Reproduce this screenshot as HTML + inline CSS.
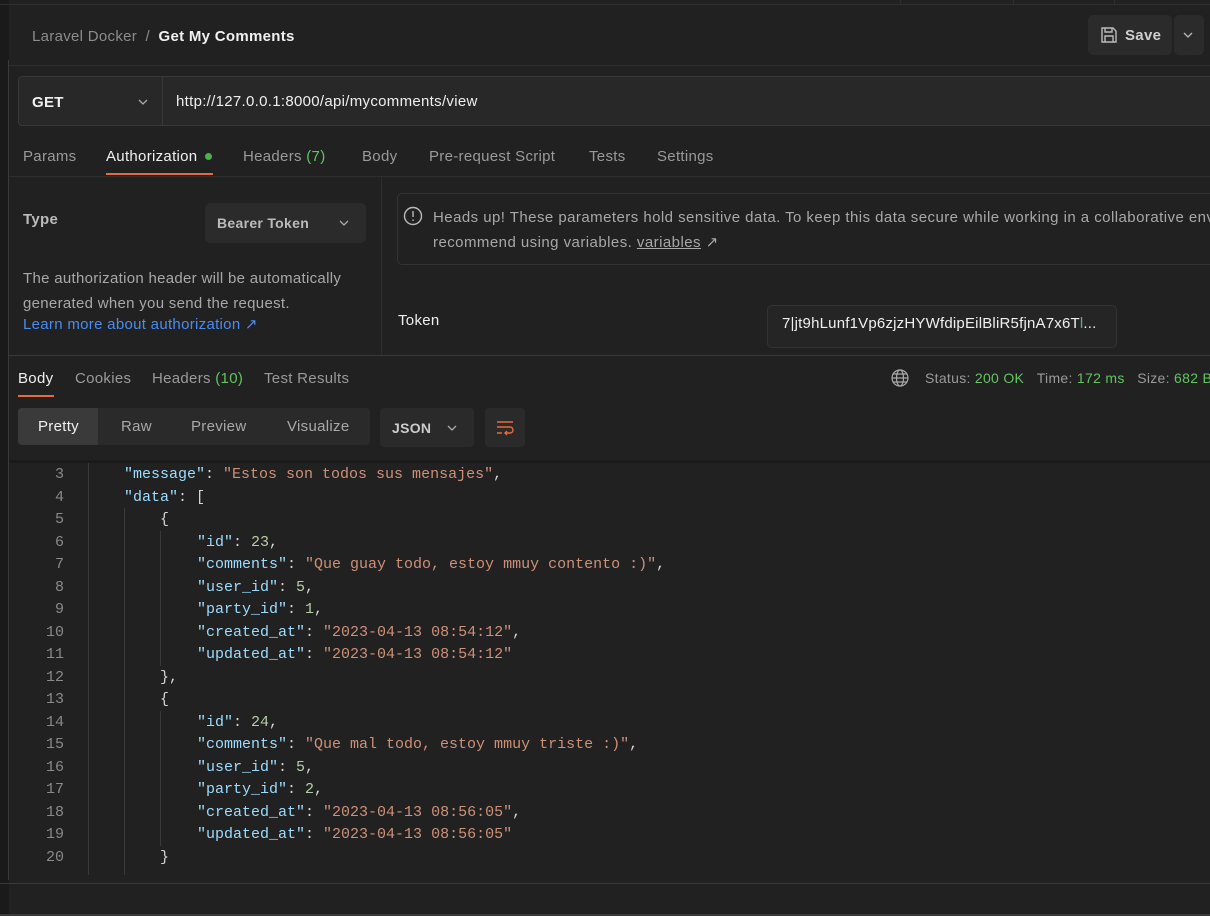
<!DOCTYPE html>
<html><head><style>
*{margin:0;padding:0;box-sizing:border-box}
body{width:1210px;height:916px;background:#212121;font-family:"Liberation Sans",sans-serif;color:#cfcfcf;position:relative;overflow:hidden;font-size:15px;letter-spacing:0.3px}
.a{position:absolute;white-space:nowrap}
.hl{position:absolute;height:1px;background:#2f2f2f}
.vl{position:absolute;width:1px;background:#2f2f2f}
.code{position:absolute;left:0;top:464px;width:1210px;font-family:"Liberation Mono",monospace;font-size:15px;letter-spacing:0}
.ln{position:absolute;height:22.5px;line-height:22.5px;white-space:pre}
.n{width:64px;text-align:right;color:#8a8a8a;left:0}
.k{color:#9cdcfe}.s{color:#ce9178}.v{color:#b5cea8}.p{color:#d4d4d4}
</style></head><body>
<div class="a" style="left:0;top:0;width:9px;height:916px;background:#1a1a1a"></div>
<div class="vl" style="left:8px;top:60px;height:820px;background:#3a3a3a"></div>
<div class="hl" style="left:0;top:4px;width:1210px"></div>
<div class="vl" style="left:900px;top:0;height:5px"></div><div class="vl" style="left:1013px;top:0;height:5px"></div><div class="vl" style="left:1114px;top:0;height:5px"></div>
<div class="a" style="left:32px;top:28px;font-size:15px;color:#8c8c8c">Laravel Docker <span style="margin:0 4px">/</span> <b style="color:#f0f0f0">Get My Comments</b></div>
<div class="a" style="left:1088px;top:15px;width:84px;height:40px;background:#2b2b2b;border-radius:5px"></div>
<svg class="a" style="left:1100px;top:26px" width="18" height="18" viewBox="0 0 18 18" fill="none" stroke="#bbb" stroke-width="1.4"><path d="M2 2h11l3 3v11H2z M5 2v4h7V2 M5 16v-6h8v6"/></svg>
<div class="a" style="left:1125px;top:27px;font-weight:bold;color:#cfcfcf">Save</div>
<div class="a" style="left:1174px;top:15px;width:30px;height:40px;background:#2b2b2b;border-radius:5px"></div>
<svg class="a" style="left:1182px;top:29px" width="12" height="12" viewBox="0 0 12 12" fill="none" stroke="#bbb" stroke-width="1.3"><path d="M2 4l4 4 4-4"/></svg>
<div class="hl" style="left:9px;top:65px;width:1201px"></div>
<div class="a" style="left:18px;top:76px;width:1200px;height:50px;background:#282828;border:1px solid #383838;border-radius:4px"></div>
<div class="vl" style="left:162px;top:77px;height:48px;background:#383838"></div>
<div class="a" style="left:32px;top:94px;font-weight:bold;color:#f0f0f0">GET</div>
<svg class="a" style="left:137px;top:96px" width="12" height="12" viewBox="0 0 12 12" fill="none" stroke="#aaa" stroke-width="1.3"><path d="M2 4l4 4 4-4"/></svg>
<div class="a" style="left:176px;top:93px;color:#eee">http://127.0.0.1:8000/api/mycomments/view</div>
<div class="a" style="left:23px;top:148px;color:#9a9a9a">Params</div>
<div class="a" style="left:106px;top:148px;color:#f0f0f0">Authorization</div>
<div class="a" style="left:205px;top:153px;width:7px;height:7px;border-radius:50%;background:#4caf50"></div>
<div class="a" style="left:106px;top:173px;width:107px;height:2px;background:#e8693c"></div>
<div class="a" style="left:243px;top:148px;color:#9a9a9a">Headers <span style="color:#5fc55f">(7)</span></div>
<div class="a" style="left:362px;top:148px;color:#9a9a9a">Body</div>
<div class="a" style="left:429px;top:148px;color:#9a9a9a">Pre-request Script</div>
<div class="a" style="left:589px;top:148px;color:#9a9a9a">Tests</div>
<div class="a" style="left:657px;top:148px;color:#9a9a9a">Settings</div>
<div class="hl" style="left:9px;top:176px;width:1201px"></div>
<div class="a" style="left:23px;top:211px;font-weight:bold;color:#bbb">Type</div>
<div class="a" style="left:205px;top:203px;width:161px;height:40px;background:#2b2b2b;border-radius:5px"></div>
<div class="a" style="left:217px;top:215px;font-size:14px;font-weight:bold;color:#bbb">Bearer Token</div>
<svg class="a" style="left:338px;top:217px" width="12" height="12" viewBox="0 0 12 12" fill="none" stroke="#aaa" stroke-width="1.3"><path d="M2 4l4 4 4-4"/></svg>
<div class="a" style="left:23px;top:266px;line-height:25px;color:#a8a8a8">The authorization header will be automatically<br>generated when you send the request.</div>
<div class="a" style="left:23px;top:315px;color:#4a8cf0">Learn more about authorization ↗</div>
<div class="vl" style="left:381px;top:177px;height:179px"></div>
<div class="a" style="left:397px;top:193px;width:830px;height:72px;border:1px solid #333;border-radius:5px"></div>
<svg class="a" style="left:403px;top:206px" width="20" height="20" viewBox="0 0 20 20" fill="none" stroke="#bbb" stroke-width="1.4"><circle cx="10" cy="10" r="8.5"/><path d="M10 5v6M10 13.5v1.5"/></svg>
<div class="a" style="left:433px;top:205px;line-height:25px;color:#a8a8a8;letter-spacing:0.45px">Heads up! These parameters hold sensitive data. To keep this data secure while working in a collaborative env<br>recommend using variables. <u>variables</u> ↗</div>
<div class="a" style="left:398px;top:312px;color:#eee">Token</div>
<div class="a" style="left:767px;top:305px;width:350px;height:43px;background:#252525;border:1px solid #333;border-radius:5px"></div>
<div class="a" style="left:782px;top:315px;color:#f0f0f0;letter-spacing:0.2px">7|jt9hLunf1Vp6zjzHYWfdipEilBliR5fjnA7x6T<span style="color:#6a8">l</span>...</div>
<div class="hl" style="left:9px;top:355px;width:1201px;background:#383838"></div>
<div class="a" style="left:18px;top:370px;color:#f0f0f0">Body</div>
<div class="a" style="left:18px;top:395px;width:36px;height:2px;background:#e8693c"></div>
<div class="a" style="left:75px;top:370px;color:#9a9a9a">Cookies</div>
<div class="a" style="left:152px;top:370px;color:#9a9a9a">Headers <span style="color:#5fc55f">(10)</span></div>
<div class="a" style="left:264px;top:370px;color:#9a9a9a">Test Results</div>
<svg class="a" style="left:890px;top:368px" width="20" height="20" viewBox="0 0 20 20" fill="none" stroke="#aaa" stroke-width="1.2"><circle cx="10" cy="10" r="8"/><ellipse cx="10" cy="10" rx="3.5" ry="8"/><path d="M2 10h16M3.5 6h13M3.5 14h13"/></svg>
<div class="a" style="left:925px;top:370px;font-size:14px;color:#9a9a9a">Status: <span style="color:#5fc55f">200 OK</span>&nbsp;&nbsp;&nbsp;Time: <span style="color:#5fc55f">172 ms</span>&nbsp;&nbsp;&nbsp;Size: <span style="color:#5fc55f">682 B</span></div>
<div class="a" style="left:18px;top:408px;width:352px;height:37px;background:#2a2a2a;border-radius:4px"></div>
<div class="a" style="left:18px;top:408px;width:80px;height:37px;background:#3a3a3a;border-radius:4px 0 0 4px"></div>
<div class="a" style="left:38px;top:418px;color:#f0f0f0">Pretty</div>
<div class="a" style="left:121px;top:418px;color:#a8a8a8">Raw</div>
<div class="a" style="left:191px;top:418px;color:#a8a8a8">Preview</div>
<div class="a" style="left:287px;top:418px;color:#a8a8a8">Visualize</div>
<div class="a" style="left:380px;top:408px;width:94px;height:39px;background:#2a2a2a;border-radius:4px"></div>
<div class="a" style="left:392px;top:420px;font-size:14px;font-weight:bold;color:#ccc">JSON</div>
<svg class="a" style="left:446px;top:422px" width="12" height="12" viewBox="0 0 12 12" fill="none" stroke="#aaa" stroke-width="1.3"><path d="M2 4l4 4 4-4"/></svg>
<div class="a" style="left:485px;top:408px;width:40px;height:39px;background:#2a2a2a;border-radius:4px"></div>
<svg class="a" style="left:495px;top:418px" width="20" height="20" viewBox="0 0 20 20" fill="none" stroke="#e8693c" stroke-width="1.4"><path d="M2 4h16M2 9h13a3 3 0 010 6h-5M12 13l-2 2 2 2M2 15h5"/></svg>
<div class="a" style="left:9px;top:460px;width:1201px;height:3px;background:#1a1a1a"></div>
<div class="vl" style="left:88px;top:463px;height:412px;background:#3a3a3a"></div>
<div class="vl" style="left:124px;top:508px;height:367px;background:#3a3a3a"></div>
<div class="vl" style="left:160px;top:531px;height:135px;background:#3a3a3a"></div>
<div class="vl" style="left:160px;top:711px;height:135px;background:#3a3a3a"></div>
<div class="code">
<div class="ln n" style="top:0">3</div><div class="ln" style="top:0;left:124px"><span class="k">"message"</span><span class="p">: </span><span class="s">"Estos son todos sus mensajes"</span><span class="p">,</span></div>
<div class="ln n" style="top:22.5px">4</div><div class="ln" style="top:22.5px;left:124px"><span class="k">"data"</span><span class="p">: [</span></div>
<div class="ln n" style="top:45px">5</div><div class="ln p" style="top:45px;left:160px">{</div>
<div class="ln n" style="top:67.5px">6</div><div class="ln" style="top:67.5px;left:197px"><span class="k">"id"</span><span class="p">: </span><span class="v">23</span><span class="p">,</span></div>
<div class="ln n" style="top:90px">7</div><div class="ln" style="top:90px;left:197px"><span class="k">"comments"</span><span class="p">: </span><span class="s">"Que guay todo, estoy mmuy contento :)"</span><span class="p">,</span></div>
<div class="ln n" style="top:112.5px">8</div><div class="ln" style="top:112.5px;left:197px"><span class="k">"user_id"</span><span class="p">: </span><span class="v">5</span><span class="p">,</span></div>
<div class="ln n" style="top:135px">9</div><div class="ln" style="top:135px;left:197px"><span class="k">"party_id"</span><span class="p">: </span><span class="v">1</span><span class="p">,</span></div>
<div class="ln n" style="top:157.5px">10</div><div class="ln" style="top:157.5px;left:197px"><span class="k">"created_at"</span><span class="p">: </span><span class="s">"2023-04-13 08:54:12"</span><span class="p">,</span></div>
<div class="ln n" style="top:180px">11</div><div class="ln" style="top:180px;left:197px"><span class="k">"updated_at"</span><span class="p">: </span><span class="s">"2023-04-13 08:54:12"</span></div>
<div class="ln n" style="top:202.5px">12</div><div class="ln p" style="top:202.5px;left:160px">},</div>
<div class="ln n" style="top:225px">13</div><div class="ln p" style="top:225px;left:160px">{</div>
<div class="ln n" style="top:247.5px">14</div><div class="ln" style="top:247.5px;left:197px"><span class="k">"id"</span><span class="p">: </span><span class="v">24</span><span class="p">,</span></div>
<div class="ln n" style="top:270px">15</div><div class="ln" style="top:270px;left:197px"><span class="k">"comments"</span><span class="p">: </span><span class="s">"Que mal todo, estoy mmuy triste :)"</span><span class="p">,</span></div>
<div class="ln n" style="top:292.5px">16</div><div class="ln" style="top:292.5px;left:197px"><span class="k">"user_id"</span><span class="p">: </span><span class="v">5</span><span class="p">,</span></div>
<div class="ln n" style="top:315px">17</div><div class="ln" style="top:315px;left:197px"><span class="k">"party_id"</span><span class="p">: </span><span class="v">2</span><span class="p">,</span></div>
<div class="ln n" style="top:337.5px">18</div><div class="ln" style="top:337.5px;left:197px"><span class="k">"created_at"</span><span class="p">: </span><span class="s">"2023-04-13 08:56:05"</span><span class="p">,</span></div>
<div class="ln n" style="top:360px">19</div><div class="ln" style="top:360px;left:197px"><span class="k">"updated_at"</span><span class="p">: </span><span class="s">"2023-04-13 08:56:05"</span></div>
<div class="ln n" style="top:382.5px">20</div><div class="ln p" style="top:382.5px;left:160px">}</div>
</div>
<div class="a" style="left:9px;top:875px;width:1201px;height:41px;background:#212121"></div>
<div class="hl" style="left:0;top:883px;width:1210px;background:#383838"></div>
<div class="hl" style="left:0;top:914px;width:1210px;height:2px;background:#3a3a3a"></div>
</body></html>
